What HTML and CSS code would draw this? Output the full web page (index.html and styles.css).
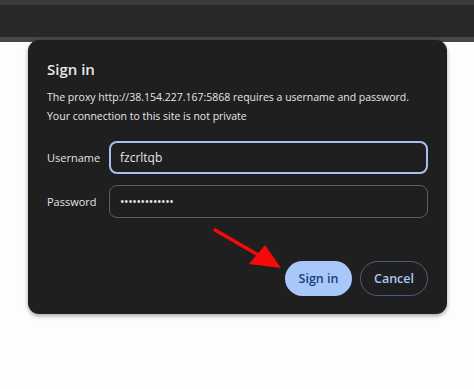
FILE: index.html
```html
<!DOCTYPE html>
<html lang="en">

<head>
    <meta charset="UTF-8">
    <meta name="viewport" content="width=device-width, initial-scale=1.0">
    <title>Sign in</title>
    <link rel="stylesheet" href="styles.css">
</head>

<body>
    <div class="top-bar"></div>

    <!-- Proxy auth dialog -->
    <div class="dialog">
        <h1 class="dialog-title">Sign in</h1>
        <p class="dialog-text">The proxy http://38.154.227.167:5868 requires a username and password.</p>
        <p class="dialog-text">Your connection to this site is not private</p>

        <div class="form-row">
            <label>Username</label>
            <div class="field focused">fzcrltqb</div>
        </div>
        <div class="form-row">
            <label>Password</label>
            <div class="field dots">•••••••••••••</div>
        </div>

        <div class="action-buttons">
            <svg class="arrow" width="80" height="50" viewBox="0 0 80 50">
                <line x1="5" y1="3" x2="50" y2="29" stroke="#f50a0a" stroke-width="3.5" stroke-linecap="round" />
                <polygon points="39,37 55,18 71,41" fill="#f50a0a" />
            </svg>
            <button class="btn-primary">Sign in</button>
            <button class="btn-outline">Cancel</button>
        </div>
    </div>
</body>

</html>
```

FILE: styles.css
```css
* {
    margin: 0;
    padding: 0;
    box-sizing: border-box;
    font-family: 'Open Sans', 'Noto Sans', sans-serif;
}

body {
    background: #fdfdfd;
    min-height: 100vh;
}

.top-bar {
    height: 42px;
    background: #282828;
    border-top: 5px solid #3b3b3b;
    border-bottom: 5px solid #474747;
}

.dialog {
    position: relative;
    margin: -2px 0 0 28px;
    width: 419px;
    height: 274px;
    background: #1f1f1f;
    border-radius: 11px;
    padding: 18px 19px 0 19px;
    box-shadow: 0 2px 4px rgba(0, 0, 0, 0.35);
    color: #e3e3e3;
}

.dialog-title {
    font-size: 15px;
    font-weight: 600;
    line-height: 22px;
    margin-bottom: 8px;
    color: #e8e8e8;
}

.dialog-text {
    font-size: 10.5px;
    line-height: 19px;
    color: #e6e6e6;
}

.form-row {
    display: flex;
    align-items: center;
    margin-top: 11px;
}

.form-row:first-of-type {
    margin-top: 15px;
}

.form-row label {
    width: 62px;
    font-size: 11px;
    color: #e3e3e3;
}

.field {
    flex: 1;
    height: 33px;
    border: 1px solid #5f5f5f;
    border-radius: 8px;
    padding: 0 10px;
    display: flex;
    align-items: center;
    font-size: 12px;
    color: #e6e6e6;
}

.field.focused {
    border: 2px solid #a8c0f0;
    padding: 0 9px;
}

.field.dots {
    font-size: 12px;
    letter-spacing: -0.4px;
}

.action-buttons {
    display: flex;
    justify-content: flex-end;
    align-items: center;
    gap: 8px;
    margin-top: 43px;
}

button {
    height: 35px;
    border-radius: 18px;
    font-size: 12.5px;
    font-weight: 600;
    cursor: pointer;
}

.btn-primary {
    width: 67px;
    background: #a8c7fa;
    color: #1d3e74;
    border: none;
}

.btn-outline {
    width: 68px;
    background: transparent;
    color: #a8c7fa;
    border: 1px solid #44617f;
}

.arrow {
    position: absolute;
    left: 182px;
    top: 187px;
}
```
